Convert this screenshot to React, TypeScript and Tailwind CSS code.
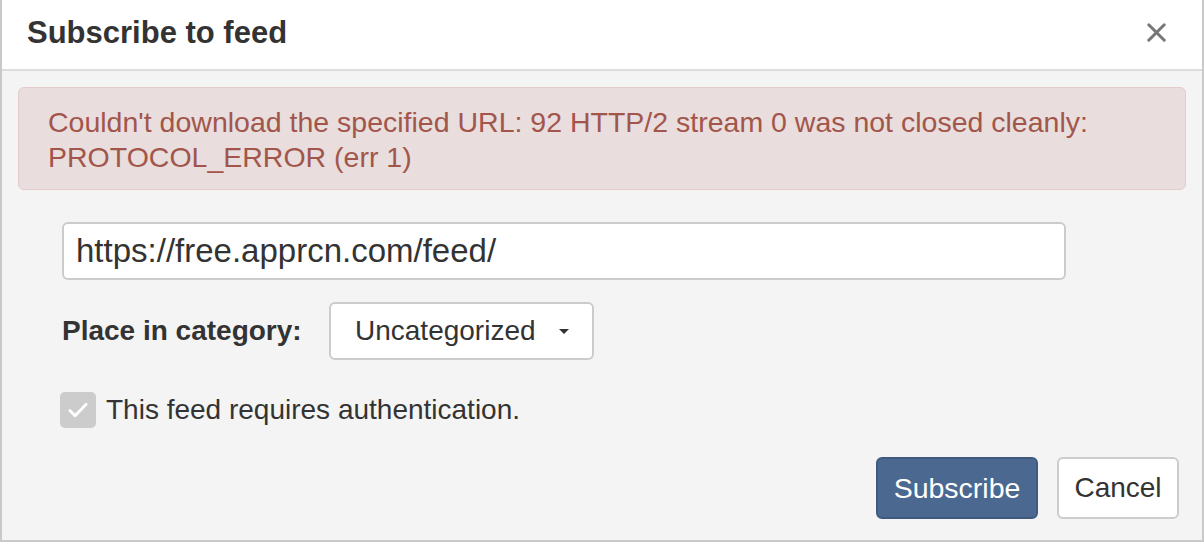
import { X } from 'lucide-react'

export default function App() {
  const font = { fontFamily: '"Liberation Sans", Arial, sans-serif' }

  return (
    <div
      className="w-[1204px] h-[542px] flex flex-col bg-[#f4f4f4] border-l-2 border-r-2 border-b-2 border-[#c9c9c9] text-[#333]"
      style={font}
    >
      {/* ヘッダー */}
      <div className="h-[71px] shrink-0 flex items-center justify-between bg-white border-b-2 border-[#dddddd] pl-[25px] pr-[30px] pb-[4px]">
        <h3 className="text-[31px] font-bold text-[#333] leading-none">Subscribe to feed</h3>
        <button className="text-[#777]" aria-label="close">
          <X size={31} strokeWidth={2.3} />
        </button>
      </div>

      {/* 本文 */}
      <div className="flex-1 flex flex-col px-[16px] pt-[16px]">
        {/* エラー */}
        <div className="h-[103px] rounded-[6px] border border-[#e2cccc] bg-[#e9dddd] px-[29px] pt-[17px] text-[28.5px] leading-[35px] text-[#a2564b] whitespace-nowrap">
          Couldn't download the specified URL: 92 HTTP/2 stream 0 was not closed cleanly:
          <br />
          PROTOCOL_ERROR (err 1)
        </div>

        {/* URL */}
        <div className="mt-[32px] pl-[44px]">
          <div className="w-[1004px] h-[58px] rounded-[6px] border-2 border-[#cccccc] bg-white flex items-center px-[12px] text-[33px] text-[#333]">
            https://free.apprcn.com/feed/
          </div>
        </div>

        {/* カテゴリ */}
        <div className="mt-[22px] pl-[44px] flex items-center">
          <span className="w-[267px] text-[28px] font-bold text-[#333]">Place in category:</span>
          <button className="w-[265px] h-[58px] rounded-[6px] border-2 border-[#cccccc] bg-white flex items-center pl-[24px] text-[28px] text-[#333]">
            Uncategorized
            <span className="ml-[23px] w-0 h-0 border-l-[5px] border-r-[5px] border-t-[5px] border-l-transparent border-r-transparent border-t-[#333]" />
          </button>
        </div>

        {/* 認証 */}
        <div className="mt-[32px] h-[36px] pl-[42px] flex items-center">
          <span className="w-[36px] h-[36px] rounded-[5px] bg-[#cccccc] flex items-center justify-center">
            <svg width="28" height="28" viewBox="0 0 24 24" fill="none" stroke="white" strokeWidth="2.4" strokeLinecap="round" strokeLinejoin="round">
              <path d="M5 12.5l4.5 4.5L19 7" />
            </svg>
          </span>
          <span className="ml-[10px] text-[28px] leading-none text-[#333]">This feed requires authentication.</span>
        </div>

        {/* ボタン */}
        <div className="mt-[29px] flex justify-end gap-[19px] pr-[7px]">
          <button className="w-[162px] h-[62px] rounded-[6px] border-2 border-[#3f5a7e] bg-[#4a6890] text-white text-[28.5px]">
            Subscribe
          </button>
          <button className="w-[122px] h-[62px] rounded-[6px] border-2 border-[#cccccc] bg-white text-[#333] text-[28px]">
            Cancel
          </button>
        </div>
      </div>
    </div>
  )
}
